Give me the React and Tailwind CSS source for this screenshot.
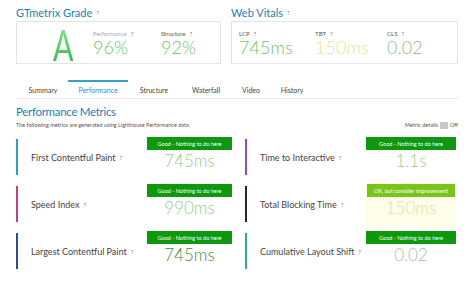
const font = { fontFamily: 'Lato, "Open Sans", sans-serif' }

const metrics = [
  [
    { label: 'First Contentful Paint', value: '745ms', bar: 'bg-[#2aa5c0]', status: 'good', color: 'text-[#8fd08f]' },
    { label: 'Speed Index', value: '990ms', bar: 'bg-[#c0408a]', status: 'good', color: 'text-[#8fd08f]' },
    { label: 'Largest Contentful Paint', value: '745ms', bar: 'bg-[#2a4f98]', status: 'good', color: 'text-[#3d8f3d]' },
  ],
  [
    { label: 'Time to Interactive', value: '1.1s', bar: 'bg-[#9a4ab8]', status: 'good', color: 'text-[#98d098]' },
    { label: 'Total Blocking Time', value: '150ms', bar: 'bg-[#2a2238]', status: 'ok', color: 'text-[#e4e0a0]' },
    { label: 'Cumulative Layout Shift', value: '0.02', bar: 'bg-[#2fae8e]', status: 'good', color: 'text-[#a3c4a3]' },
  ],
]

function Q() {
  return <span className="text-[6px] text-gray-500 ml-[4px] align-top">?</span>
}

function Metric({ m, badgeW }) {
  return (
    <div className="flex h-[47px]">
      <div className={`w-[2px] h-[36px] mt-[2px] ${m.bar}`} />
      <div className="flex-1 flex items-center pl-[13px] h-[40px] text-[9px] text-[#444] whitespace-nowrap">
        {m.label}<Q />
      </div>
      <div className={`flex flex-col items-center ${badgeW} ${m.status === 'ok' ? 'bg-[#fdfdea] -mt-[2px] pt-[2px] h-[46px]' : ''}`}>
        <div className={`h-[13px] flex items-center justify-center text-[5.5px] text-white ${m.status === 'ok' ? 'bg-[#78c41a] w-[88px]' : 'w-full bg-[#0d980d]'}`}>
          {m.status === 'ok' ? 'OK, but consider improvement' : 'Good - Nothing to do here'}
        </div>
        <div className={`text-[17px] leading-[22px] font-light ${m.color}`}>{m.value}</div>
      </div>
    </div>
  )
}

export default function App() {
  return (
    <div className="w-[474px] h-[283px] bg-white overflow-hidden" style={font}>
      <div className="flex gap-[10px] px-[16px] pt-[6px]">
        {/* grade */}
        <div className="w-[207px]">
          <div className="text-[11px] leading-[14px] text-[#1d7fb6]">GTmetrix Grade<Q /></div>
          <div className="mt-[1px] h-[43px] border border-[#e4e4e4] flex items-center">
            <div className="w-[76px] flex justify-center pl-[16px]">
              <span className="text-[42px] leading-none font-normal mt-[4px] scale-x-[0.72] bg-gradient-to-b from-[#8ee88e] to-[#2fb54a] bg-clip-text text-transparent">A</span>
            </div>
            <div className="w-[68px]">
              <div className="text-[6px] text-[#aaa]">Performance<Q /></div>
              <div className="text-[18px] leading-[19px] text-[#6cc36c] font-light">96%</div>
            </div>
            <div>
              <div className="text-[6px] text-[#555]">Structure<Q /></div>
              <div className="text-[18px] leading-[19px] text-[#6cc36c] font-light">92%</div>
            </div>
          </div>
        </div>
        {/* vitals */}
        <div className="w-[229px]">
          <div className="text-[11px] leading-[14px] text-[#1d7fb6]">Web Vitals<Q /></div>
          <div className="mt-[1px] h-[43px] border border-[#e4e4e4] flex items-center pl-[7px]">
            <div className="w-[76px]">
              <div className="text-[6px] text-[#555]">LCP<Q /></div>
              <div className="text-[18px] leading-[19px] text-[#6cc36c] font-light">745ms</div>
            </div>
            <div className="w-[72px]">
              <div className="text-[6px] text-[#555]">TBT<Q /></div>
              <div className="text-[18px] leading-[19px] text-[#e6e39c] font-light">150ms</div>
            </div>
            <div>
              <div className="text-[6px] text-[#555]">CLS<Q /></div>
              <div className="text-[18px] leading-[19px] text-[#8cc08c] font-light">0.02</div>
            </div>
          </div>
        </div>
      </div>

      {/* tabs */}
      <div className="mx-[16px] mt-[16px] border-b border-[#e6e6e6] flex h-[19px] pl-[2px] text-[7px]">
        <div className="w-[50px] flex items-center justify-center pt-[2px] text-[#444]">Summary</div>
        <div className="w-[60px] flex items-center justify-center border-t-2 border-[#3aa0c8] text-[#2a8ec0]">Performance</div>
        <div className="w-[52px] flex items-center justify-center pt-[2px] text-[#444]">Structure</div>
        <div className="w-[52px] flex items-center justify-center pt-[2px] text-[#444]">Waterfall</div>
        <div className="w-[38px] flex items-center justify-center pt-[2px] text-[#444]">Video</div>
        <div className="w-[44px] flex items-center justify-center pt-[2px] text-[#444]">History</div>
      </div>

      <div className="px-[16px]">
        <div className="mt-[5px] text-[11.5px] leading-[16px] tracking-[-0.3px] text-[#1d7fb6]">Performance Metrics</div>
        <div className="flex justify-between items-center text-[5.5px] text-[#555] mt-[1px]">
          <span>The following metrics are generated using Lighthouse Performance data.</span>
          <span className="flex items-center gap-[2px]">
            Metric details
            <span className="w-[8px] h-[7px] bg-[#c8c8c8]" />
            Off
          </span>
        </div>

        <div className="grid grid-cols-[229px_1fr] mt-[8px]">
          <div>{metrics[0].map(m => <Metric key={m.label} m={m} badgeW="w-[85px] mr-[13px]" />)}</div>
          <div>{metrics[1].map(m => <Metric key={m.label} m={m} badgeW="w-[90px] mr-[2px]" />)}</div>
        </div>
      </div>
    </div>
  )
}
